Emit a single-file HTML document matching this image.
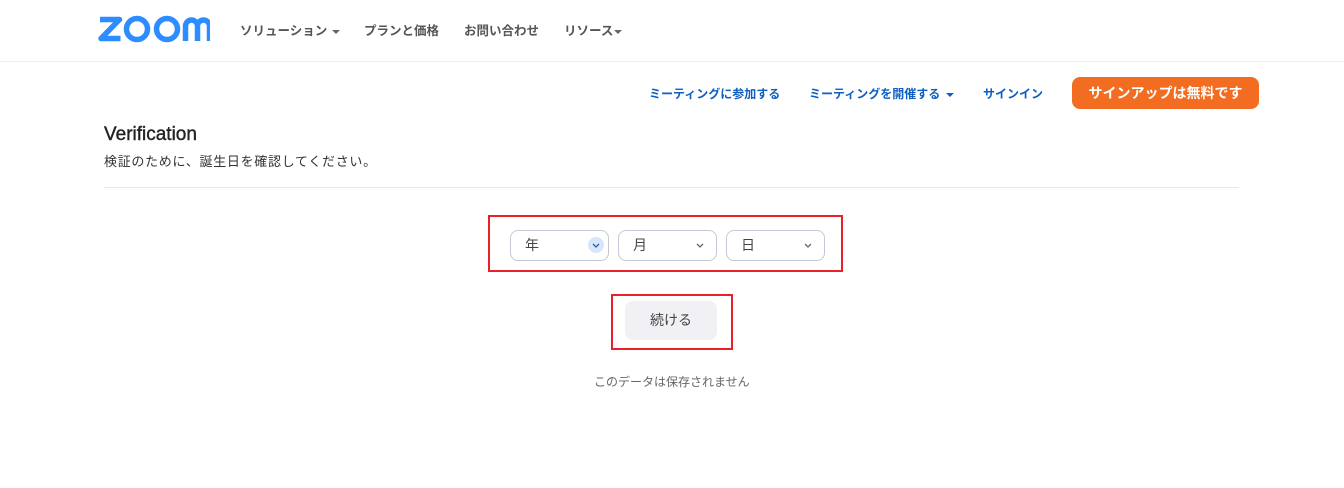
<!DOCTYPE html>
<html><head><meta charset="utf-8"><style>
*{margin:0;padding:0;box-sizing:border-box}
body{width:1344px;height:488px;background:#fff;font-family:"Liberation Sans","Noto Sans CJK JP",sans-serif;position:relative;overflow:hidden}
.a{position:absolute;white-space:nowrap}
.nav{top:20px;font-size:12.5px;color:#555;font-weight:bold}
.car{display:inline-block;width:0;height:0;border-left:4px solid transparent;border-right:4px solid transparent;border-top:4px solid #666;vertical-align:middle;margin-left:5px}
.hr1{left:0;top:61px;width:1344px;height:1px;background:#eee}
.blue{top:85px;font-size:12px;color:#0E5FC1;font-weight:bold}
.btn{left:1072px;top:77px;width:187px;height:32px;background:#F26D21;border-radius:8px;color:#fff;font-weight:bold;font-size:14px;text-align:center;line-height:32px}
.sel{top:230px;width:99px;height:31px;border:1px solid #c8c8d4;border-radius:8px;font-size:14px;color:#444;padding-left:14px;line-height:29px}
.chev{position:absolute;right:10px;top:9px}
</style></head><body>
<svg class="a" style="left:96px;top:14px" width="114" height="30" viewBox="0 0 114 30">
<g fill="none" stroke="#2D8CFF" stroke-width="5.5" stroke-linejoin="round">
<path d="M4 5.5H23.5L5 24.5H24.5"/>
<circle cx="41" cy="15" r="10.5"/>
<circle cx="71" cy="15" r="10.5"/>
<path d="M89.5 27V12a6 6 0 0 1 12 0V27M101.5 12a6 6 0 0 1 12 0V27" />
</g></svg>
<div class="a nav" style="left:240px">ソリューション<span class="car"></span></div>
<div class="a nav" style="left:364px">プランと価格</div>
<div class="a nav" style="left:464px">お問い合わせ</div>
<div class="a nav" style="left:564px">リソース<span class="car" style="margin-left:1px"></span></div>
<div class="hr1 a"></div>
<div class="a blue" style="left:649px">ミーティングに参加する</div>
<div class="a blue" style="left:809px">ミーティングを開催する<span class="car" style="border-top-color:#0E5FC1;margin-left:6px"></span></div>
<div class="a blue" style="left:983px">サインイン</div>
<div class="a btn">サインアップは無料です</div>
<div class="a" style="left:104px;top:124px;font-size:19px;color:#222;-webkit-text-stroke:0.4px #222">Verification</div>
<div class="a" style="left:104px;top:151px;font-size:13px;color:#333;letter-spacing:0.7px">検証のために、誕生日を確認してください。</div>
<div class="a" style="left:104px;top:187px;width:1135px;height:1px;background:#e8e8ee"></div>
<div class="a" style="left:488px;top:215px;width:355px;height:57px;border:2px solid #e8202a"></div>
<div class="a sel" style="left:510px">年<svg class="chev" style="right:3px;top:5px" width="18" height="18"><circle cx="9" cy="9" r="8" fill="#d6e6fb"/><path d="M6 8l3 3 3-3" stroke="#3a5a9a" stroke-width="1.3" fill="none"/></svg></div>
<div class="a sel" style="left:618px">月<svg class="chev" width="12" height="12"><path d="M3 4l3 3 3-3" stroke="#666" stroke-width="1.3" fill="none"/></svg></div>
<div class="a sel" style="left:726px">日<svg class="chev" width="12" height="12"><path d="M3 4l3 3 3-3" stroke="#666" stroke-width="1.3" fill="none"/></svg></div>
<div class="a" style="left:611px;top:294px;width:122px;height:56px;border:2px solid #e8202a"></div>
<div class="a" style="left:625px;top:301px;width:92px;height:39px;background:#f1f1f5;border-radius:8px;font-size:14px;color:#444;text-align:center;line-height:39px">続ける</div>
<div class="a" style="left:594px;top:373px;font-size:12px;color:#666">このデータは保存されません</div>
</body></html>
